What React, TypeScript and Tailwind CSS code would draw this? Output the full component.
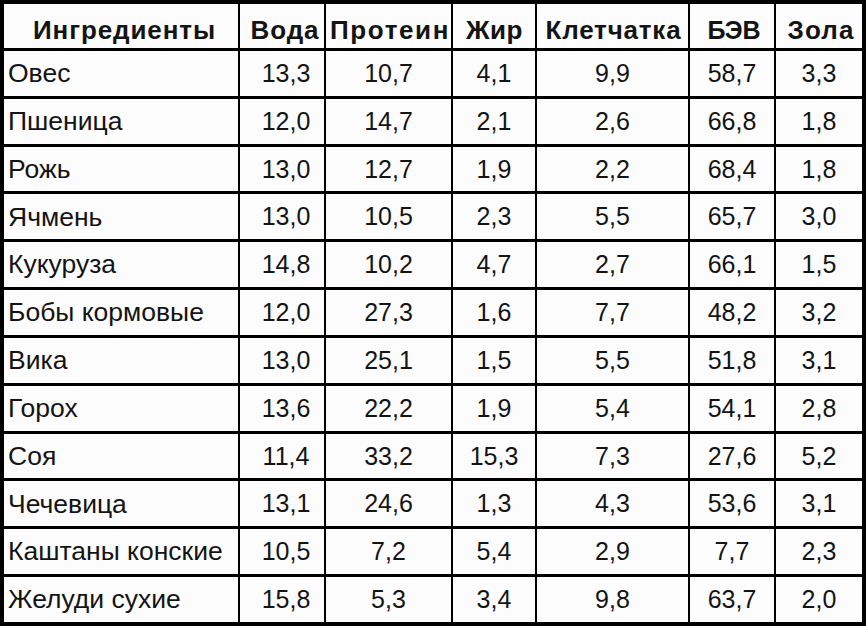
import React from "react";

const headers: { t: string; c: string }[] = [
  { t: "Ингредиенты", c: "text-[26px] tracking-[0.9px] pl-[7px]" },
  { t: "Вода", c: "text-[26px] tracking-[0.9px] pl-[6px]" },
  { t: "Протеин", c: "text-[26px] tracking-[1.6px] pl-[3px]" },
  { t: "Жир", c: "text-[26px] tracking-[0.5px] pl-[1px]" },
  { t: "Клетчатка", c: "text-[26px] tracking-[0.8px] pl-[2px]" },
  { t: "БЭВ", c: "text-[25px] tracking-[0px] pl-[4px]" },
  { t: "Зола", c: "text-[26px] tracking-[1.1px] pl-[4px]" },
];

const rows: string[][] = [
  ["Овес", "13,3", "10,7", "4,1", "9,9", "58,7", "3,3"],
  ["Пшеница", "12,0", "14,7", "2,1", "2,6", "66,8", "1,8"],
  ["Рожь", "13,0", "12,7", "1,9", "2,2", "68,4", "1,8"],
  ["Ячмень", "13,0", "10,5", "2,3", "5,5", "65,7", "3,0"],
  ["Кукуруза", "14,8", "10,2", "4,7", "2,7", "66,1", "1,5"],
  ["Бобы кормовые", "12,0", "27,3", "1,6", "7,7", "48,2", "3,2"],
  ["Вика", "13,0", "25,1", "1,5", "5,5", "51,8", "3,1"],
  ["Горох", "13,6", "22,2", "1,9", "5,4", "54,1", "2,8"],
  ["Соя", "11,4", "33,2", "15,3", "7,3", "27,6", "5,2"],
  ["Чечевица", "13,1", "24,6", "1,3", "4,3", "53,6", "3,1"],
  ["Каштаны конские", "10,5", "7,2", "5,4", "2,9", "7,7", "2,3"],
  ["Желуди сухие", "15,8", "5,3", "3,4", "9,8", "63,7", "2,0"],
];

export default function App() {
  return (
    <div
      className="w-[866px] h-[626px] bg-black p-[4px] grid grid-cols-[234px_84px_125px_82px_151px_84px_86px] grid-rows-[44px_repeat(12,1fr)] gap-x-[2px] gap-y-[3px] text-[#141414]"
      style={{ fontFamily: '"Liberation Sans", Arial, sans-serif' }}
    >
      {headers.map((h) => (
        <div
          key={h.t}
          className={
            "bg-[#fcfcfc] flex items-center justify-center pt-[8px] font-bold leading-none whitespace-nowrap overflow-hidden " +
            h.c
          }
        >
          {h.t}
        </div>
      ))}
      {rows.map((r) =>
        r.map((c, i) =>
          i === 0 ? (
            <div
              key={r[0] + i}
              className="bg-[#fcfcfc] flex items-center pl-[4px] text-[26.5px] leading-none whitespace-nowrap"
            >
              {c}
            </div>
          ) : (
            <div
              key={r[0] + i}
              className={
                i === 1
                  ? "bg-[#fcfcfc] flex items-center justify-center pl-[8px] text-[25px] leading-none"
                  : "bg-[#fcfcfc] flex items-center justify-center text-[25px] leading-none"
              }
            >
              {c}
            </div>
          )
        )
      )}
    </div>
  );
}
